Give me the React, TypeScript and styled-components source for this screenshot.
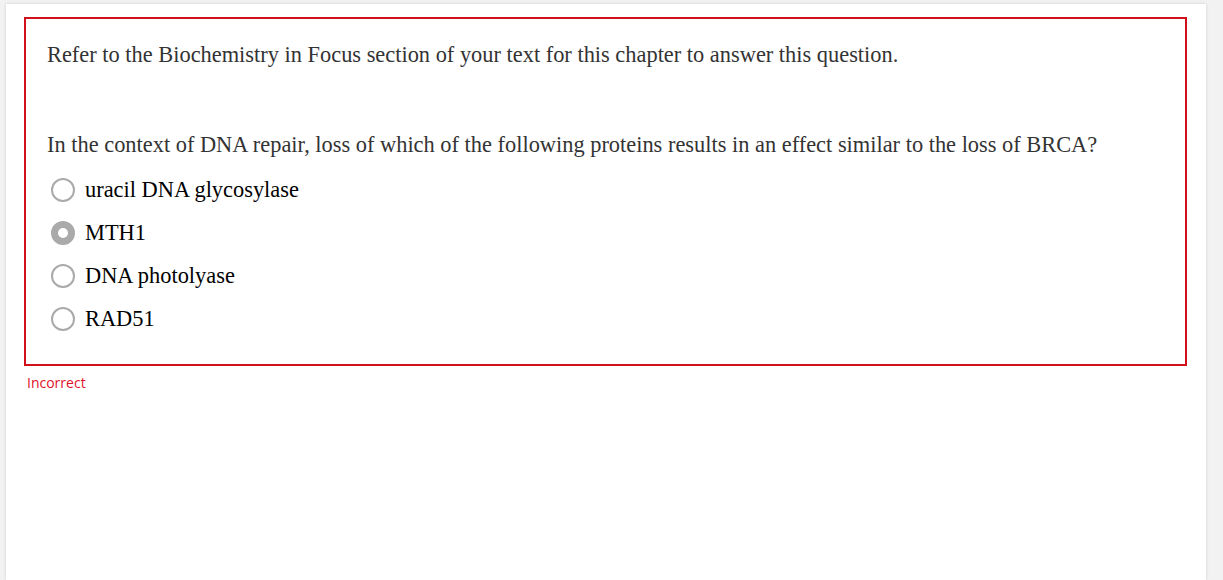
import React from "react";
import styled, { createGlobalStyle } from "styled-components";

const Global = createGlobalStyle`
  html, body { margin: 0; padding: 0; background: #f2f2f2; }
  body { font-family: "Liberation Serif", "Times New Roman", serif; }
`;

const Page = styled.div`
  padding: 4px 17px 0 6px;
  height: 576px;
`;

const Card = styled.div`
  background: #ffffff;
  height: 100%;
  box-shadow: 0 0 3px rgba(0, 0, 0, 0.15);
  padding: 13px 19px 0 18px;
  box-sizing: border-box;
`;

const QuestionBox = styled.div`
  border: 2px solid #d0111b;
  padding: 21px 20px 21px 21px;
  height: 349px;
  box-sizing: border-box;
`;

const Prompt = styled.p<{ $gap?: number }>`
  margin: 0 0 ${(p) => p.$gap ?? 0}px 0;
  font-size: 22.4px;
  line-height: 30px;
  color: #333333;
`;

const Options = styled.div`
  display: flex;
  flex-direction: column;
  gap: 13px;
  margin-top: 15px;
  padding-left: 4px;
`;

const Option = styled.label`
  display: flex;
  align-items: center;
  gap: 10px;
  height: 30px;
  font-size: 22.4px;
  color: #000000;
`;

const Radio = styled.span<{ $checked?: boolean }>`
  width: 24px;
  height: 24px;
  border-radius: 50%;
  box-sizing: border-box;
  border: ${(p) => (p.$checked ? "7px" : "2px")} solid #aaaaaa;
  background: #ffffff;
  flex-shrink: 0;
`;

const Feedback = styled.div`
  margin-top: 7px;
  padding-left: 3px;
  font-family: "Open Sans", "Noto Sans", sans-serif;
  font-size: 14px;
  color: #e0102a;
`;

const options = [
  { text: "uracil DNA glycosylase", checked: false },
  { text: "MTH1", checked: true },
  { text: "DNA photolyase", checked: false },
  { text: "RAD51", checked: false },
];

export default function App() {
  return (
    <>
      <Global />
      <Page>
        <Card>
          <QuestionBox>
            <Prompt $gap={60}>
              Refer to the Biochemistry in Focus section of your text for this chapter to answer this question.
            </Prompt>
            <Prompt>
              In the context of DNA repair, loss of which of the following proteins results in an effect similar to the loss of BRCA?
            </Prompt>
            <Options>
              {options.map((o) => (
                <Option key={o.text}>
                  <Radio $checked={o.checked} />
                  {o.text}
                </Option>
              ))}
            </Options>
          </QuestionBox>
          <Feedback>Incorrect</Feedback>
        </Card>
      </Page>
    </>
  );
}
